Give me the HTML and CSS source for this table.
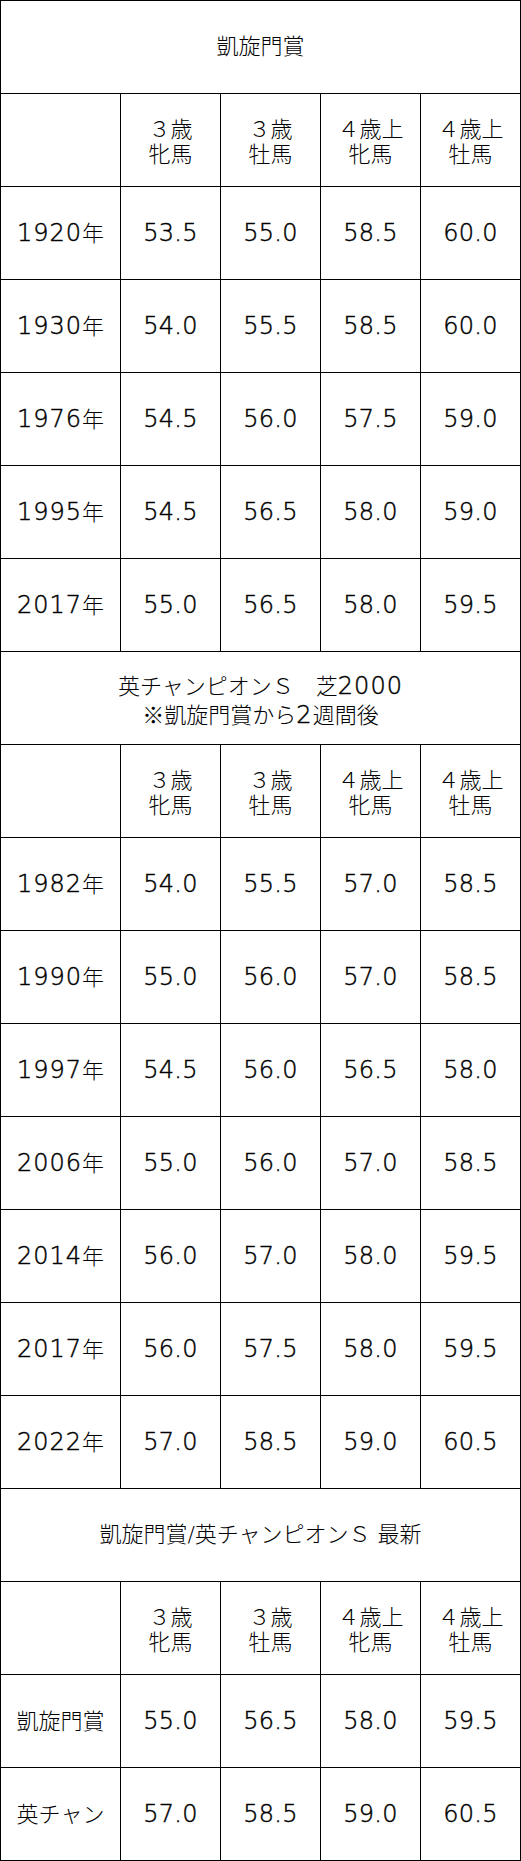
FILE: index.html
```html
<!DOCTYPE html>
<html lang="ja">
<head>
<meta charset="utf-8">
<title>斤量表</title>
<link rel="stylesheet" href="styles.css">
</head>
<body>
<div class="sheet">
  <div class="cell title">凱旋門賞</div>

  <div class="cell"></div>
  <div class="cell head">３歳<br>牝馬</div>
  <div class="cell head">３歳<br>牡馬</div>
  <div class="cell head">４歳上<br>牝馬</div>
  <div class="cell head">４歳上<br>牡馬</div>

  <div class="cell year"><span class="d">1920</span>年</div><div class="cell num">53.5</div><div class="cell num">55.0</div><div class="cell num">58.5</div><div class="cell num">60.0</div>
  <div class="cell year"><span class="d">1930</span>年</div><div class="cell num">54.0</div><div class="cell num">55.5</div><div class="cell num">58.5</div><div class="cell num">60.0</div>
  <div class="cell year"><span class="d">1976</span>年</div><div class="cell num">54.5</div><div class="cell num">56.0</div><div class="cell num">57.5</div><div class="cell num">59.0</div>
  <div class="cell year"><span class="d">1995</span>年</div><div class="cell num">54.5</div><div class="cell num">56.5</div><div class="cell num">58.0</div><div class="cell num">59.0</div>
  <div class="cell year"><span class="d">2017</span>年</div><div class="cell num">55.0</div><div class="cell num">56.5</div><div class="cell num">58.0</div><div class="cell num">59.5</div>

  <div class="cell title two">英チャンピオンＳ　芝<span class="d">2000</span><br><span class="mark">※</span>凱旋門賞から<span class="d">2</span>週間後</div>

  <div class="cell"></div>
  <div class="cell head">３歳<br>牝馬</div>
  <div class="cell head">３歳<br>牡馬</div>
  <div class="cell head">４歳上<br>牝馬</div>
  <div class="cell head">４歳上<br>牡馬</div>

  <div class="cell year"><span class="d">1982</span>年</div><div class="cell num">54.0</div><div class="cell num">55.5</div><div class="cell num">57.0</div><div class="cell num">58.5</div>
  <div class="cell year"><span class="d">1990</span>年</div><div class="cell num">55.0</div><div class="cell num">56.0</div><div class="cell num">57.0</div><div class="cell num">58.5</div>
  <div class="cell year"><span class="d">1997</span>年</div><div class="cell num">54.5</div><div class="cell num">56.0</div><div class="cell num">56.5</div><div class="cell num">58.0</div>
  <div class="cell year"><span class="d">2006</span>年</div><div class="cell num">55.0</div><div class="cell num">56.0</div><div class="cell num">57.0</div><div class="cell num">58.5</div>
  <div class="cell year"><span class="d">2014</span>年</div><div class="cell num">56.0</div><div class="cell num">57.0</div><div class="cell num">58.0</div><div class="cell num">59.5</div>
  <div class="cell year"><span class="d">2017</span>年</div><div class="cell num">56.0</div><div class="cell num">57.5</div><div class="cell num">58.0</div><div class="cell num">59.5</div>
  <div class="cell year"><span class="d">2022</span>年</div><div class="cell num">57.0</div><div class="cell num">58.5</div><div class="cell num">59.0</div><div class="cell num">60.5</div>

  <div class="cell title">凱旋門賞/英チャンピオンＳ 最新</div>

  <div class="cell"></div>
  <div class="cell head">３歳<br>牝馬</div>
  <div class="cell head">３歳<br>牡馬</div>
  <div class="cell head">４歳上<br>牝馬</div>
  <div class="cell head">４歳上<br>牡馬</div>

  <div class="cell year">凱旋門賞</div><div class="cell num">55.0</div><div class="cell num">56.5</div><div class="cell num">58.0</div><div class="cell num">59.5</div>
  <div class="cell year">英チャン</div><div class="cell num">57.0</div><div class="cell num">58.5</div><div class="cell num">59.0</div><div class="cell num">60.5</div>
</div>
</body>
</html>
```
FILE: styles.css
```css
html, body {
  margin: 0;
  padding: 0;
  background: #ffffff;
}

.sheet {
  display: grid;
  grid-template-columns: 119px 99px 99px 99px 99px;
  grid-auto-rows: 92px;
  gap: 1px;
  padding: 1px;
  width: 519px;
  background: #000000;
  font-family: "DejaVu Sans", "Noto Sans CJK JP", sans-serif;
  font-size: 22px;
  font-weight: 300;
  color: #000000;
}

.cell {
  background: #ffffff;
  display: flex;
  align-items: center;
  justify-content: center;
  text-align: center;
  line-height: 25px;
  white-space: nowrap;
}

.title {
  grid-column: 1 / -1;
  display: block;
  padding-top: 33px;
  box-sizing: border-box;
}

.title.two {
  padding-top: 21px;
  line-height: 27px;
}

.mark {
  font-family: "Noto Sans CJK JP", sans-serif;
}

.head {
  padding-top: 4px;
}

.num {
  font-size: 24px;
  letter-spacing: 0.3px;
  -webkit-text-stroke: 0.45px #000000;
}

.d {
  font-size: 24px;
  letter-spacing: 1px;
  -webkit-text-stroke: 0.45px #000000;
}

.year {
  font-size: 22px;
}
```
